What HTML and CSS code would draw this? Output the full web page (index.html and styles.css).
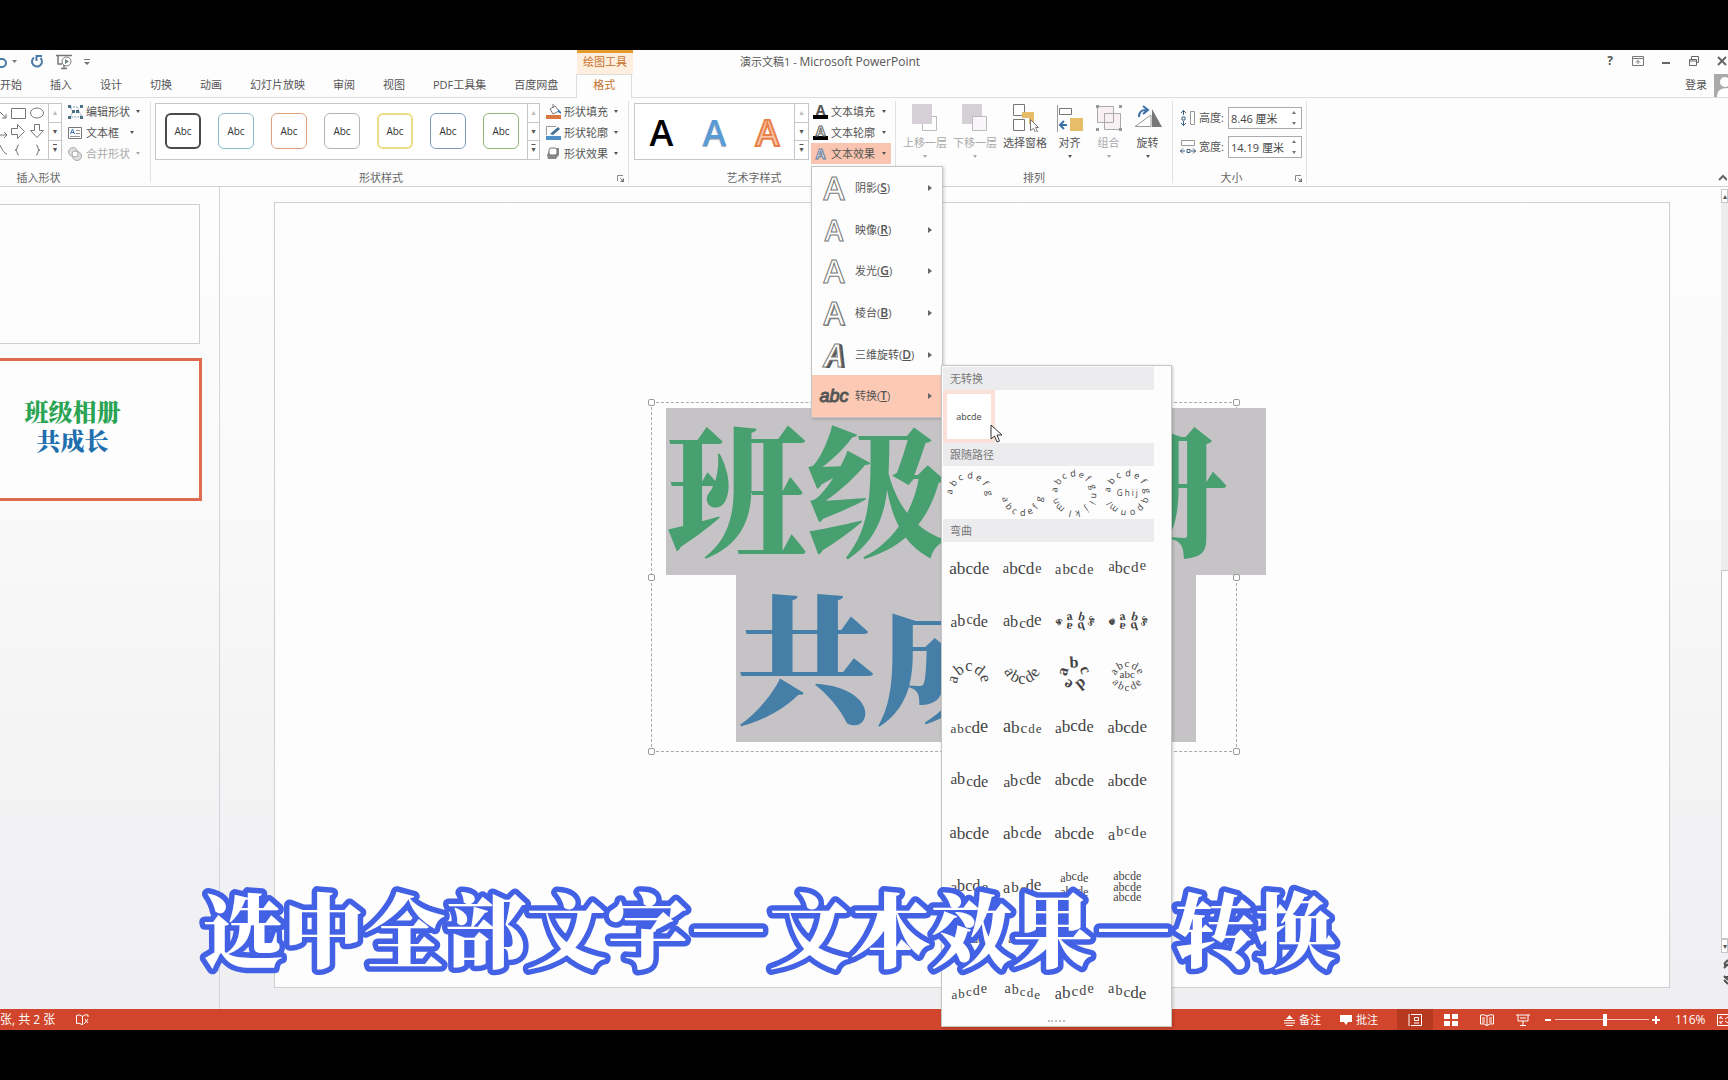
FILE: index.html
```html
<!DOCTYPE html>
<html lang="zh-CN">
<head>
    <meta charset="UTF-8">
    <meta name="viewport" content="width=device-width, initial-scale=1.0">
    <title>演示文稿1 - Microsoft PowerPoint</title>
    <link rel="stylesheet" href="styles.css">
</head>
<body>
    <div class="window">
        <!-- Title bar -->
        <header class="titlebar">
            <div class="quick-access">
                <button aria-label="撤消"><svg width="18" height="16" viewBox="0 0 18 16"><path d="M-2 5h4a4 4 0 0 1 0 8h-2" fill="none" stroke="#4a7ba6" stroke-width="2"/><path d="M12 6h5l-2.500 3z" fill="#777"/></svg></button>
                <button aria-label="重复"><svg width="14" height="14" viewBox="0 0 14 14"><path d="M4 2.500A5 5 0 1 0 10.500 3" fill="none" stroke="#4a7ba6" stroke-width="2"/><path d="M6.500 6V1H12" fill="none" stroke="#4a7ba6" stroke-width="2"/></svg></button>
                <button aria-label="放映"><svg width="16" height="16" viewBox="0 0 16 16"><path d="M0 1.500h16M2 2v8h4M5 14.500h6M8 11v3" fill="none" stroke="#777" stroke-width="1.500"/><circle cx="10.500" cy="7.500" r="4.500" fill="#fff" stroke="#777"/><path d="M9 5l4 2.500L9 10z" fill="#6a8a80"/></svg></button>
                <button aria-label="自定义"><svg width="6" height="8" viewBox="0 0 6 8"><path d="M0 1h6v1H0zM0 4h6L3 7z" fill="#777"/></svg></button>
            </div>
            <div class="context-title">绘图工具</div>
            <h1>演示文稿1 - <span>Microsoft PowerPoint</span></h1>
            <div class="window-buttons">
                <button aria-label="帮助" class="help">?</button>
                <button aria-label="功能区显示选项"><svg width="12" height="10" viewBox="0 0 12 10"><path d="M.5.5h11v9H.5zM.5 2.500h11M6 8V4.500M4 6.500l2-2 2 2" fill="none" stroke="#777"/></svg></button>
                <button aria-label="最小化"><svg width="12" height="10" viewBox="0 0 12 10"><path d="M2 7h8" stroke="#666" stroke-width="2"/></svg></button>
                <button aria-label="还原"><svg width="12" height="10" viewBox="0 0 12 10"><path d="M1.500 3.500h7v6h-7zM3.500 3V.5h7v6H9M1.500 5h7" fill="none" stroke="#666"/></svg></button>
                <button aria-label="关闭"><svg width="12" height="10" viewBox="0 0 12 10"><path d="M2 1l8 8M10 1L2 9" stroke="#666" stroke-width="2"/></svg></button>
            </div>
        </header>

        <!-- Tabs -->
        <nav class="tabs">
            <a href="#">开始</a>
            <a href="#">插入</a>
            <a href="#">设计</a>
            <a href="#">切换</a>
            <a href="#">动画</a>
            <a href="#">幻灯片放映</a>
            <a href="#">审阅</a>
            <a href="#">视图</a>
            <a href="#">PDF工具集</a>
            <a href="#">百度网盘</a>
            <a href="#" class="active">格式</a>
            <a href="#" class="sign-in">登录</a>
            <svg class="avatar" width="14" height="23" viewBox="0 0 14 23"><path d="M0 0h14v23H0z" fill="#aaa"/><circle cx="11" cy="8" r="5" fill="#fff"/><path d="M3 23c0-6 3-9 11-9v9z" fill="#fff"/></svg>
        </nav>

        <!-- Ribbon -->
        <section class="ribbon">
            <div class="group insert-group">
                <div class="group-body">
                    <div class="gallery shapes">
                        <svg width="48" height="54" viewBox="0 0 48 54" fill="none" stroke="#777"><path d="M0 8l6 6M6 10v4H2M11.500 4.500h14v10h-14z"/><ellipse cx="37" cy="9" rx="6.500" ry="5"/><path d="M0 31h7M4 28l3 3-3 3M11.500 24.500h6v-4l7 7-7 7v-4h-6zM34.500 20.500h5v6h4l-6.500 7-6.500-7h4zM0 41q4 9 7 9M19 41q-2 0-2 3t-2 2q2 0 2 2 0 3 2 3M36 41q2 0 2 3t2 2q-2 0-2 2 0 3-2 3"/></svg>
                        <div class="scroller"><button class="off">▴</button><button>▾</button><button>▾</button></div>
                    </div>
                    <div class="commands">
                        <button><svg width="16" height="14" viewBox="0 0 16 14"><path d="M2 2L9 2 14 12H2L5 7z" fill="none" stroke="#8899aa" stroke-dasharray="2 1"/><path d="M0 0h3v3H0zM12 0h3v3h-3zM0 11h3v3H0zM12 11h3v3h-3zM4 5h3v3H4zM8 5h3v3H8z" fill="#4a7186"/></svg>编辑形状<i class="caret"></i></button>
                        <button><svg width="16" height="14" viewBox="0 0 16 14"><path d="M.5 1.500h13v11H.5z" fill="#fff" stroke="#777"/><path d="M2.500 8L4.500 3l2 5M3 6.500h3" fill="none" stroke="#3d78b5"/><path d="M8 4.500h4M8 7.500h4M2 10.500h10" stroke="#999"/></svg>文本框<i class="caret wide"></i></button>
                        <button disabled><svg width="16" height="14" viewBox="0 0 16 14" stroke="#aaa" fill="#ddd"><circle cx="5" cy="5" r="4.500"/><circle cx="9" cy="9" r="4.500"/><circle cx="7" cy="7" r="3" fill="#fff"/></svg>合并形状<i class="caret"></i></button>
                    </div>
                </div>
                <div class="group-label">插入形状</div>
            </div>

            <div class="group style-group">
                <div class="group-body">
                    <div class="gallery styles">
                        <button class="swatch black">Abc</button>
                        <button class="swatch teal">Abc</button>
                        <button class="swatch orange">Abc</button>
                        <button class="swatch gray">Abc</button>
                        <button class="swatch yellow">Abc</button>
                        <button class="swatch blue">Abc</button>
                        <button class="swatch green">Abc</button>
                        <div class="scroller"><button class="off">▴</button><button>▾</button><button>▾</button></div>
                    </div>
                    <div class="commands">
                        <button><svg width="16" height="15" viewBox="0 0 16 15"><path d="M4 5l5-3 4 5-6 3zM7 4V0" fill="#fff" stroke="#777"/><path d="M12 5l3 3v2l-3-2z" fill="#3d78b5"/><path d="M0 11h15v4H0z" fill="#d97742"/></svg>形状填充<i class="caret"></i></button>
                        <button><svg width="16" height="15" viewBox="0 0 16 15"><path d="M.5 10V1.500H10" fill="none" stroke="#999"/><path d="M4 9l8-7 2 2-7 6z" fill="#3f6f95"/><path d="M0 11h15v4H0z" fill="#4f8fc7"/></svg>形状轮廓<i class="caret"></i></button>
                        <button><svg width="16" height="15" viewBox="0 0 16 15"><path d="M5 2h8v7l-3 4H2l-1-4z" fill="#888"/><rect x="3" y="2" width="8" height="7" rx="2" fill="#fff" stroke="#777"/></svg>形状效果<i class="caret"></i></button>
                    </div>
                </div>
                <div class="group-label">形状样式</div>
                <button class="launcher" aria-label="设置形状格式"><svg width="8" height="8" viewBox="0 0 8 8"><path d="M.5 6V.5H6M3 3l3 3" fill="none" stroke="#888"/><path d="M7 3v4H3z" fill="#777"/></svg></button>
            </div>

            <div class="group wordart-group">
                <div class="group-body">
                    <div class="gallery wordart">
                        <button class="art plain">A</button>
                        <button class="art sky">A</button>
                        <button class="art peach">A</button>
                        <div class="scroller"><button class="off">▴</button><button>▾</button><button>▾</button></div>
                    </div>
                    <div class="commands text-commands">
                        <button><span class="letter fill">A</span>文本填充<i class="caret"></i></button>
                        <button><span class="letter outline">A</span>文本轮廓<i class="caret"></i></button>
                        <button class="open"><span class="letter effect">A</span>文本效果<i class="caret"></i></button>
                        <ul class="effect-menu">
                            <li><button><span class="big-a">A</span>阴影(<u>S</u>)<i class="arrow"></i></button></li>
                            <li><button><span class="big-a mirror">A</span>映像(<u>R</u>)<i class="arrow"></i></button></li>
                            <li><button><span class="big-a">A</span>发光(<u>G</u>)<i class="arrow"></i></button></li>
                            <li><button><span class="big-a bevel">A</span>棱台(<u>B</u>)<i class="arrow"></i></button></li>
                            <li><button><span class="big-a depth">A</span>三维旋转(<u>D</u>)<i class="arrow"></i></button></li>
                            <li class="current"><button><span class="big-abc">abc</span>转换(<u>T</u>)<i class="arrow"></i></button>
                                <div class="warp-panel">
                                    <h2>无转换</h2>
                                    <button class="no-warp">abcde</button>
                                    <h2>跟随路径</h2>
                                    <div class="warp-grid" id="paths"></div>
                                    <h2>弯曲</h2>
                                    <div class="warp-grid" id="warps"></div>
                                    <div class="grip"></div>
                                    <svg class="pointer" width="13" height="20" viewBox="0 0 13 20"><path d="M1 1v14l3.500-3 2.500 6 2.500-1-2.500-6H12z" fill="#fff" stroke="#333"/></svg>
                                </div>
                            </li>
                        </ul>
                    </div>
                </div>
                <div class="group-label">艺术字样式</div>
            </div>

            <div class="group arrange-group">
                <div class="group-body">
                    <button class="large" disabled><svg width="28" height="28" viewBox="0 0 28 28"><path d="M11.500 12.500h14v14h-14z" fill="#fff" stroke="#bbb"/><path d="M1 0h20v20H1z" fill="#d5d0d6"/></svg>上移一层<i class="caret"></i></button>
                    <button class="large" disabled><svg width="28" height="28" viewBox="0 0 28 28"><path d="M1 0h20v20H1z" fill="#d5d0d6"/><path d="M11.500 12.500h14v14h-14z" fill="#faf5fa" stroke="#bbb"/></svg>下移一层<i class="caret"></i></button>
                    <button class="large"><svg width="28" height="28" viewBox="0 0 28 28"><path d="M2.500.5h11v11h-11zM2.500 15.500h11v11h-11z" fill="#fff" stroke="#777"/><path d="M11 8h12v12h-5v-6h-7z" fill="#e8bd6a"/><path d="M19.500 15.500v11l3-2 2 4 2-1-2-4h3z" fill="#fff" stroke="#777"/></svg>选择窗格</button>
                    <button class="large narrow"><svg width="28" height="28" viewBox="0 0 28 28"><path d="M1.500 1v27" stroke="#999"/><path d="M3.500 4.500h12v6h-12z" fill="#fff" stroke="#777"/><path d="M14 14h13v13H14z" fill="#e8bd6a"/><path d="M11 21H5m3-4l-4 4 4 4" fill="none" stroke="#3d6ea5" stroke-width="2"/></svg>对齐<i class="caret"></i></button>
                    <button class="large narrow" disabled><svg width="28" height="28" viewBox="0 0 28 28"><path d="M2.500 2.500h16v16h-16zM9.500 9.500h16v16h-16z" fill="#f5e9ee" fill-opacity=".7" stroke="#aaa"/><path d="M1 1h3v3H1zM24 1h3v3h-3zM1 24h3v3H1zM24 24h3v3h-3z" fill="#999"/></svg>组合<i class="caret"></i></button>
                    <button class="large narrow"><svg width="28" height="28" viewBox="0 0 28 28"><path d="M1 22.500h16V11z" fill="#fff" stroke="#999"/><path d="M18 23V5l10 18z" fill="#777"/><path d="M5 13c0-6 3-7 7-7m-3-4l5 4-5 4" fill="none" stroke="#3d6ea5" stroke-width="2"/></svg>旋转<i class="caret"></i></button>
                </div>
                <div class="group-label">排列</div>
            </div>

            <div class="group size-group">
                <div class="group-body">
                    <div class="size-row">
                        <svg width="16" height="16" viewBox="0 0 16 16"><path d="M10.500 1.500h4v13h-4z" fill="#fff" stroke="#999"/><path d="M3.500 0v5M1 3l2.500-2.500L6 3M3.500 16v-5M1 13l2.500 2.500L6 13" fill="none" stroke="#3d6080"/><path d="M2 7h3v3H2z" fill="none" stroke="#3d6080"/></svg>
                        <label for="height">高度:</label>
                        <div class="spin"><input id="height" type="text" value="8.46 厘米"><i class="up"></i><i class="down"></i></div>
                    </div>
                    <div class="size-row">
                        <svg width="16" height="16" viewBox="0 0 16 16"><path d="M1.500 1.500h13v5h-13z" fill="#fff" stroke="#999"/><path d="M0 12h5M3 9.500L.5 12 3 14.500M16 12h-5M13 9.500l2.500 2.500L13 14.500" fill="none" stroke="#3d6080"/><path d="M7 10.500h3v3H7z" fill="none" stroke="#3d6080"/></svg>
                        <label for="width">宽度:</label>
                        <div class="spin"><input id="width" type="text" value="14.19 厘米"><i class="up"></i><i class="down"></i></div>
                    </div>
                </div>
                <div class="group-label">大小</div>
                <button class="launcher" aria-label="大小和位置"><svg width="8" height="8" viewBox="0 0 8 8"><path d="M.5 6V.5H6M3 3l3 3" fill="none" stroke="#888"/><path d="M7 3v4H3z" fill="#777"/></svg></button>
            </div>
            <button class="collapse" aria-label="折叠功能区"><svg width="9" height="8" viewBox="0 0 9 8"><path d="M1 6l4-4 4 4" fill="none" stroke="#666" stroke-width="2"/></svg></button>
        </section>

        <!-- Slides -->
        <main class="workspace">
            <aside class="thumbs">
                <div class="thumb"></div>
                <div class="thumb selected">
                    <p class="green-text">班级相册</p>
                    <p class="blue-text">共成长</p>
                </div>
            </aside>
            <div class="stage">
                <div class="slide">
                    <div class="textbox">
                        <p class="green-text"><span>班级相册</span></p>
                        <p class="blue-text"><span>共成长</span></p>
                        <i class="handle nw"></i><i class="handle ne"></i>
                        <i class="handle w"></i><i class="handle e"></i>
                        <i class="handle sw"></i><i class="handle se"></i>
                    </div>
                </div>
            </div>
            <div class="scrollbar">
                <button aria-label="向上">▴</button>
                <div class="track"></div>
                <div class="scroll-thumb"></div>
                <button aria-label="向下">▾</button>
                <div class="page-arrows"><svg width="7" height="28" viewBox="0 0 7 28"><path d="M3 6l4-4M3 10l4-4M3 18l4 4M3 22l4 4M3 7h4M3 19h4" stroke="#555" stroke-width="2"/></svg></div>
            </div>
        </main>

        <!-- Status bar -->
        <footer class="statusbar">
            <span class="count">张, 共 2 张</span>
            <svg width="13" height="12" viewBox="0 0 13 12" fill="none" stroke="#fff"><path d="M6.500 2v9M6 2Q3 0 .5 1.500v8Q3 8.500 6 10.500M7 2q2-2 5-1v2M8 10l4-5M9 5l3 4"/></svg>
            <div class="status-right">
                <button class="notes"><svg width="11" height="12" viewBox="0 0 11 12"><path d="M2 5l3.500-4L9 5z" fill="#fff"/><path d="M0 6.500h11M0 9h11M2 11.500h7" stroke="#fff"/></svg>备注</button>
                <button class="comments"><svg width="12" height="12" viewBox="0 0 12 12"><path d="M0 1h12v7H8l-2 3-2-3H0z" fill="#fff"/></svg>批注</button>
                <button class="view active" aria-label="普通"><svg width="14" height="12" viewBox="0 0 14 12" fill="none" stroke="#fff"><path d="M1 0v12M3 .5h10.500v11H3M6.500 3.500h4v3h-4zM6 9h5"/></svg></button>
                <button class="view" aria-label="幻灯片浏览"><svg width="14" height="12" viewBox="0 0 14 12"><path d="M0 0h6v5H0zM8 0h6v5H8zM0 7h6v5H0zM8 7h6v5H8z" fill="#fff"/></svg></button>
                <button class="view" aria-label="阅读视图"><svg width="14" height="12" viewBox="0 0 14 12" fill="none" stroke="#fff"><path d="M7 2v10M7 2Q4 0 .5 1v9Q4 9 7 11.500 10 9 13.500 10V1Q10 0 7 2M2 4h3M2 6h3M2 8h3M9 4h3M9 6h3M9 8h3"/></svg></button>
                <button class="view" aria-label="幻灯片放映"><svg width="14" height="12" viewBox="0 0 14 12" fill="none" stroke="#fff"><path d="M0 1h14M2 1v6h10V1M7 7v4M4 11.500h6M4 4h6"/></svg></button>
                <button class="zoom-step" aria-label="缩小"><svg width="8" height="8" viewBox="0 0 8 8"><path d="M1 4h6" stroke="#fff" stroke-width="2"/></svg></button>
                <input type="range" min="0" max="100" value="53" aria-label="缩放">
                <button class="zoom-step" aria-label="放大"><svg width="8" height="8" viewBox="0 0 8 8"><path d="M0 4h8M4 0v8" stroke="#fff" stroke-width="2"/></svg></button>
                <span class="percent">116%</span>
                <svg width="11" height="12" viewBox="0 0 11 12" fill="none" stroke="#fff"><path d="M11 .5H.5v11H11M3 3l3 2M3 9l3-2M3 5V3h2M3 7v2h2M11 3L8 5M11 9L8 7"/></svg>
            </div>
        </footer>

        <svg class="caption" width="1150" height="100"><text x="6" y="79">选中全部文字—文本效果—转换</text></svg>
    </div>
    <script src="script.js"></script>
</body>
</html>
```
FILE: styles.css
```css
/* Page */
* {
    box-sizing: border-box;
}

body {
    margin: 0;
    padding: 50px 0;
    height: 100vh;
    background-color: #000;
    color: #555;
    font-family: "Open Sans", "Noto Sans CJK SC", sans-serif;
    font-size: 11px;
    line-height: 16px;
    overflow: hidden;
}

button {
    margin: 0;
    padding: 0;
    border: none;
    background: none;
    color: inherit;
    font: inherit;
    white-space: nowrap;
}

button:disabled {
    color: #aaa;
}

h1, h2, p, ul {
    margin: 0;
    padding: 0;
}

h1, h2 {
    font-weight: normal;
}

svg {
    display: block;
    flex: none;
}

.window {
    position: relative;
    display: flex;
    flex-direction: column;
    height: 100%;
    background-color: #fdfdfd;
}

/* Title bar */
.titlebar {
    display: flex;
    height: 24px;
}

.quick-access {
    display: flex;
    align-items: center;
    gap: 12px;
    width: 577px;
}

.context-title {
    width: 56px;
    border-top: 3px solid #e59a2c;
    background-color: #fdeedd;
    color: #c5712e;
    line-height: 18px;
    text-align: center;
}

h1 {
    margin-left: 107px;
    font-size: 11px;
    line-height: 23px;
    white-space: nowrap;
}

h1 span {
    font-size: 12px;
}

.window-buttons {
    display: flex;
    align-items: center;
    gap: 16px;
    margin-left: auto;
    padding-bottom: 2px;
}

.help {
    width: 12px;
    font-size: 12px;
    font-weight: bold;
}

/* Tabs */
.tabs {
    display: flex;
    height: 24px;
    border-bottom: 1px solid #dcdcdc;
}

.tabs a {
    padding: 0 14px;
    color: #555;
    line-height: 22px;
    text-decoration: none;
    white-space: nowrap;
}

.tabs a:first-child {
    padding-left: 0;
}

.tabs .active {
    height: 24px;
    margin-left: 4px;
    padding: 0 16px;
    border: 1px solid #dcdcdc;
    border-bottom: none;
    background-color: #fdfdfd;
    color: #c5712e;
    line-height: 20px;
}

.tabs .sign-in {
    margin-left: auto;
    padding: 0 7px;
}

/* Ribbon */
.ribbon {
    display: flex;
    height: 89px;
    padding-top: 3px;
    border-bottom: 1px solid #d2d0d4;
}

.group {
    position: relative;
    display: flex;
    flex: none;
    flex-direction: column;
    height: 82px;
    border-right: 1px solid #e2e2e2;
}

.insert-group {
    width: 151px;
}

.style-group {
    width: 478px;
    padding-left: 4px;
}

.wordart-group {
    width: 267px;
    padding-left: 5px;
}

.arrange-group {
    width: 277px;
}

.size-group {
    width: 134px;
}

.group-body {
    display: flex;
    height: 69px;
    flex: none;
}

.group-label {
    text-align: center;
    color: #666;
}

.insert-group .group-label {
    width: 77px;
}

.style-group .group-label {
    width: 452px;
}

.wordart-group .group-label {
    width: 240px;
}

.size-group .group-label {
    width: 117px;
}

.gallery {
    display: flex;
    height: 57px;
    margin-top: 2px;
    border: 1px solid #c6c6c6;
    background-color: #fff;
}

.shapes {
    width: 62px;
    border-left: none;
}

.styles {
    width: 385px;
    align-items: center;
    gap: 17px;
    padding-left: 9px;
}

.wordart {
    width: 175px;
}

.scroller {
    display: flex;
    flex-direction: column;
    width: 14px;
    height: 55px;
    margin-left: auto;
    border-left: 1px solid #c6c6c6;
}

.scroller button {
    flex: 1;
    font-family: "DejaVu Sans", sans-serif;
    font-size: 8px;
    line-height: 8px;
}

.scroller button + button {
    border-top: 1px solid #c6c6c6;
}

.scroller button:last-child {
    text-decoration: overline;
}

.scroller .off {
    color: #bbb;
}

.styles .scroller {
    margin-left: -9px;
}

.swatch {
    width: 36px;
    height: 36px;
    flex: none;
    margin-bottom: 2px;
    border: 1px solid;
    border-radius: 6px;
    color: #333;
    font-size: 10px;
    line-height: 32px;
}

.black { border: 2px solid #4a4a4a; }
.teal { border-color: #8ab9cb; }
.orange { border-color: #e0a07c; }
.gray { border-color: #b5b5b5; }
.yellow { border: 2px solid #ecdc84; }
.blue { border-color: #7c9cbc; }
.green { border-color: #90ba78; }

.art {
    flex: 1;
    font-size: 36px;
    font-weight: 600;
    line-height: 58px;
}

.plain {
    color: #000;
}

.sky {
    color: #5b9bd5;
    text-shadow: 0 1px 1px #aaa;
}

.peach {
    color: #f8c4a4;
    -webkit-text-stroke: 2px #e8804a;
}

.commands {
    display: flex;
    flex-direction: column;
    margin-left: 6px;
}

.commands > button {
    display: flex;
    align-items: center;
    gap: 2px;
    height: 21px;
}

.caret {
    width: 0;
    margin-left: 4px;
    border: 2px solid transparent;
    border-top: 3px solid;
    border-bottom: none;
}

.caret.wide {
    margin-left: 9px;
}

.text-commands {
    position: relative;
}

.wordart-group .text-commands {
    margin-left: 2px;
}

.text-commands > button {
    width: 80px;
    padding-left: 2px;
    gap: 3px;
}

.text-commands > .open {
    background-color: #f9c5b0;
}

.letter {
    width: 15px;
    height: 15px;
    font-size: 14px;
    font-weight: bold;
    line-height: 12px;
    text-align: center;
}

.letter.fill {
    border-bottom: 4px solid #000;
}

.letter.outline {
    border-bottom: 4px solid #000;
    color: #fff;
    -webkit-text-stroke: 1px #666;
}

.letter.effect {
    color: #dde6f2;
    line-height: 15px;
    -webkit-text-stroke: 1px #6b7f9c;
}

.launcher {
    position: absolute;
    right: 3px;
    bottom: 0;
}

.large {
    display: flex;
    flex-direction: column;
    align-items: center;
    width: 50px;
    padding-top: 3px;
}

.large.narrow {
    width: 39px;
}

.large .caret {
    margin: 4px 0 0;
}

.large svg {
    margin-bottom: 3px;
}

.arrange-group .group-body {
    padding-left: 4px;
}

.size-group .group-body {
    flex-direction: column;
    gap: 7px;
    padding: 6px 0 0 7px;
}

.size-row {
    display: flex;
    align-items: center;
    gap: 3px;
}

.size-row label {
    width: 26px;
}

.spin {
    position: relative;
    width: 74px;
    height: 22px;
}

.spin input {
    width: 100%;
    height: 100%;
    padding: 0 2px;
    border: 1px solid #ababab;
    background-color: #fff;
    color: #444;
    font-family: inherit;
    font-size: 11px;
}

.spin i {
    position: absolute;
    right: 6px;
    border: 2px solid transparent;
}

.spin .up {
    top: 4px;
    border-top: none;
    border-bottom: 3px solid #777;
}

.spin .down {
    bottom: 4px;
    border-bottom: none;
    border-top: 3px solid #777;
}

.collapse {
    align-self: flex-end;
    margin: 0 1px 4px auto;
}

/* Text effect menu */
.effect-menu {
    position: absolute;
    top: 65px;
    left: 0;
    z-index: 2;
    display: flex;
    flex-direction: column;
    width: 132px;
    height: 252px;
    border: 1px solid #c6c6c6;
    background-color: #fdfdfd;
    box-shadow: 1px 1px 3px rgba(0, 0, 0, 0.2);
    list-style: none;
}

.effect-menu li {
    position: relative;
    display: flex;
    flex: 1;
}

.effect-menu li > button {
    display: flex;
    align-items: center;
    width: 100%;
    padding-left: 7px;
}

.effect-menu u {
    font-size: 12px;
    font-weight: 600;
}

.effect-menu .current {
    background-color: #fcc9b5;
}

.big-a {
    width: 30px;
    margin-right: 6px;
    color: #fff;
    font-size: 32px;
    font-weight: 600;
    line-height: 36px;
    -webkit-text-stroke: 1px #777;
}

.big-a.mirror {
    font-size: 28px;
}

.big-a.bevel {
    text-shadow: 1px 1px 0 #777;
}

.big-a.depth {
    font-style: italic;
    text-shadow: 2px 0 0 #555, 3px 1px 0 #555;
}

.big-abc {
    width: 30px;
    margin-right: 6px;
    color: #555;
    font-family: "Liberation Sans", sans-serif;
    font-size: 18px;
    font-style: italic;
    -webkit-text-stroke: 1px #555;
}

.arrow {
    margin: 0 10px 0 auto;
    border: 3px solid transparent;
    border-left: 4px solid #666;
    border-right: none;
}

/* Transform gallery */
.warp-panel {
    position: absolute;
    bottom: -610px;
    left: 129px;
    width: 231px;
    height: 662px;
    padding: 1px;
    border: 1px solid #c6c6c6;
    background-color: #fdfdfd;
    box-shadow: 1px 1px 3px rgba(0, 0, 0, 0.2);
}

.warp-panel h2 {
    width: 211px;
    height: 23px;
    padding-left: 7px;
    background-color: #ececee;
    color: #777;
    font-size: 11px;
    line-height: 24px;
}

.no-warp {
    display: block;
    width: 52px;
    height: 53px;
    border: 4px solid #fbe0da;
    background-color: #fff;
    color: #444;
    font-size: 9px;
}

.warp-grid {
    display: grid;
    grid-template-columns: repeat(4, 1fr);
    grid-auto-rows: 53px;
    width: 210px;
}

.warp-grid svg {
    width: 100%;
    height: 53px;
    overflow: visible;
    fill: #444;
    font-family: "Liberation Serif", serif;
    text-anchor: middle;
}

#paths svg {
    font-family: "Open Sans", sans-serif;
}

.grip {
    width: 17px;
    margin: 1px auto;
    border-top: 2px dotted #c0c0c0;
}

.pointer {
    position: absolute;
    top: 58px;
    left: 48px;
}

/* Slides */
.workspace {
    display: flex;
    flex: 1;
    min-height: 0;
    overflow: hidden;
    background: linear-gradient(#fdfdfd, #fafafb 35%, #f5f5f6 60%, #efeef1);
}

.thumbs {
    width: 220px;
    flex: none;
    overflow: hidden;
    padding-top: 17px;
    border-right: 1px solid #d5d4d8;
}

.thumb {
    width: 247px;
    height: 140px;
    margin-left: -47px;
    margin-bottom: 14px;
    border: 1px solid #d0cdd4;
    background-color: #fdfdfd;
}

.thumb.selected {
    width: 249px;
    height: 143px;
    padding-top: 35px;
    padding-right: 10px;
    border: 3px solid #dd6c50;
    font-family: "Noto Serif CJK SC", "Noto Sans CJK SC", sans-serif;
    font-size: 24px;
    font-weight: 900;
    line-height: 29px;
    text-align: center;
}

.thumb .green-text {
    color: #2aa454;
}

.thumb .blue-text {
    color: #1f6fae;
}

.stage {
    display: flex;
    flex: 1;
    padding: 15px 51px 21px 54px;
}

.slide {
    position: relative;
    flex: 1;
    border: 1px solid #d0cfd3;
    background-color: #fdfdfd;
}

.textbox {
    position: absolute;
    top: 199px;
    left: 27%;
    width: 586px;
    height: 350px;
    padding: 5px 0 0 14px;
    border: 1px dashed #aaa;
    font-family: "Noto Serif CJK SC", "Noto Sans CJK SC", sans-serif;
    font-size: 140px;
    font-weight: 900;
    line-height: 153px;
}

.textbox p {
    display: flex;
    justify-content: center;
    width: 600px;
}

.textbox span {
    height: 167px;
    padding-right: 40px;
    background-color: #c5c3c6;
    white-space: nowrap;
}

.textbox .green-text {
    color: #489f70;
}

.textbox .blue-text {
    color: #457fa8;
}

.handle {
    position: absolute;
    width: 7px;
    height: 7px;
    border: 1px solid #999;
    border-radius: 2px;
    background-color: #fff;
}

.nw { top: -4px; left: -4px; }
.ne { top: -4px; right: -4px; }
.w { top: 171px; left: -4px; }
.e { top: 171px; right: -4px; }
.sw { bottom: -4px; left: -4px; }
.se { bottom: -4px; right: -4px; }

.scrollbar {
    display: flex;
    flex-direction: column;
    width: 7px;
    padding-top: 2px;
    overflow: hidden;
}

.scrollbar button {
    height: 14px;
    border: 1px solid #c6c6c6;
    background-color: #fff;
    font-size: 8px;
    line-height: 10px;
}

.track {
    flex: 1;
    background-color: #ededee;
}

.scroll-thumb {
    flex: 1;
    border: 1px solid #c6c6c6;
    border-right: none;
    background-color: #fff;
}

.page-arrows {
    height: 56px;
    padding-top: 5px;
}

/* Status bar */
.statusbar {
    display: flex;
    align-items: center;
    height: 21px;
    background-color: #d0452b;
    color: #fff;
}

.count {
    width: 76px;
    font-size: 12px;
}

.status-right {
    display: flex;
    align-items: center;
    margin-left: auto;
}

.notes, .comments {
    display: flex;
    align-items: center;
    gap: 4px;
    margin-right: 19px;
}

.view {
    display: flex;
    align-items: center;
    justify-content: center;
    width: 36px;
    height: 21px;
}

.view.active {
    background-color: #b73a20;
}

.zoom-step {
    margin: 0 3px;
}

input[type="range"] {
    width: 94px;
    height: 12px;
    margin: 0;
    appearance: none;
    background: linear-gradient(#f3c4b8, #f3c4b8) center / 100% 1px no-repeat;
}

input[type="range"]::-webkit-slider-thumb {
    appearance: none;
    width: 4px;
    height: 12px;
    background-color: #fff;
}

.percent {
    width: 54px;
    padding-left: 12px;
    font-size: 12px;
}

/* Video caption */
.caption {
    position: absolute;
    bottom: 48px;
    left: 196px;
    z-index: 3;
    overflow: visible;
    fill: #fff;
    stroke: #4361e4;
    stroke-width: 11px;
    stroke-linejoin: round;
    paint-order: stroke;
    font-family: "Noto Serif CJK SC", "Noto Sans CJK SC", sans-serif;
    font-size: 81px;
    font-weight: 900;
}
```
FILE: script.js
```javascript
const letters = ['a', 'b', 'c', 'd', 'e'];

// one line of text, each letter with its own size and baseline
function line(sizes, rise, y = 5) {
    const spans = sizes.map((size, i) => {
        const dy = i ? rise[i - 1] - rise[i] : -rise[0];
        const dx = i && size > 12 && size < 16 ? 1 : 0;
        return `<tspan dx="${dx}" dy="${dy}" font-size="${size}">${letters[i]}</tspan>`;
    }).join('');
    return `<text x="0" y="${y}">${spans}</text>`;
}

// letters set round a circle, angles in degrees from the top
function ring(text, r, start, step, size, cy = 0, inside = false, weight = 400) {
    const xs = [], ys = [], turns = [];
    [...text].forEach((ch, i) => {
        const a = start + i * step;
        const rad = a * Math.PI / 180;
        // shift back by about half a letter along the tangent
        const half = (inside ? -1 : 1) * size / 4;
        xs.push((r * Math.sin(rad) - half * Math.cos(rad)).toFixed(1));
        ys.push((cy - r * Math.cos(rad) - half * Math.sin(rad)).toFixed(1));
        turns.push(inside ? a + 180 : a);
    });
    return `<text x="${xs.join(' ')}" y="${ys.join(' ')}" rotate="${turns.join(' ')}" font-size="${size}" font-weight="${weight}" text-anchor="start">${text}</text>`;
}

function draw(id, cells) {
    document.getElementById(id).innerHTML = cells.map(cell =>
        `<svg viewBox="-26 -26 52 52">${cell}</svg>`
    ).join('');
}

const flat = [0, 0, 0, 0, 0];

draw('paths', [
    ring('abcdefg', 17, -80, 27, 9, 3),
    ring('abcdefg', 20, 258, -26, 9, 3, true),
    ring('abcdefgnijklmn', 17, -80, 25, 9, 1),
    ring('abcdefgqponml', 17, -80, 27, 9, 1) + '<text x="0" y="3" font-size="8">G h i j</text>'
]);

draw('warps', [
    line([17, 17, 17, 17, 17], flat),
    line([14, 17, 18, 17, 14], [1, 0, 0, 0, 1]),
    line([14, 15, 17, 15, 14], flat),
    line([14, 16, 16, 15, 14], [3, 1, 0, 2, 4]),
    line([15, 16, 14, 16, 16], [0, 1, 3, 1, 0]),
    line([16, 16, 15, 16, 17], [1, 0, -1, 0, 2]),
    ring('sabs', 22, -38, 27, 12, 20, false, 700) + ring('sabs', 22, 218, -27, 12, -20, false, 700),
    ring('eabs', 22, -38, 27, 12, 20, false, 700) + ring('eabs', 22, 218, -27, 12, -20, false, 700),
    ring('abcde', 12, -74, 37, 16, 9),
    ring('abcde', 19, 238, -29, 16, -10, true),
    ring('abcde', 7, -75, 72, 16, 0, false, 700),
    ring('abcde', 12, -58, 29, 11, 5) + '<text y="3" font-size="11">abc</text>' + ring('abcde', 18, 228, -24, 11, -2, true),
    line([13, 13, 15, 17, 18], [0, 0, 0, 0, 1]),
    line([18, 17, 15, 13, 13], [1, 0, 0, 0, 0]),
    line([15, 17, 17, 17, 16], [0, 1, 2, 2, 1]),
    line([16, 17, 17, 17, 17], [0, 1, 0, 0, 1]),
    line([15, 16, 15, 16, 16], [2, 2, 0, -1, -1]),
    line([15, 16, 15, 16, 16], [-1, 0, 1, 2, 2]),
    line([16, 17, 17, 17, 16], [1, 1, 0, 0, 0]),
    line([15, 17, 17, 17, 17], [0, 0, 0, 0, 1]),
    line([16, 17, 17, 17, 17], [1, 0, 0, 0, 1]),
    line([17, 16, 14, 16, 17], [0, 1, 1, 1, 0]),
    line([16, 17, 17, 17, 17], [1, 0, 0, 0, 0]),
    line([16, 14, 13, 15, 15], [-1, 3, 5, 3, 1]),
    line([15, 16, 16, 16, 15], [0, 1, 1, 1, 0]),
    line([16, 15, 13, 16, 17], [-1, 0, -1, 1, 2]),
    line([12, 12, 12, 12, 12], [0, 1, 2, 1, 0], -4) + line([12, 12, 12, 12, 12], [0, 1, 2, 1, 0], 9),
    line([12, 12, 12, 12, 12], flat, -6) + line([12, 12, 12, 12, 12], flat, 4) + line([12, 12, 12, 12, 12], flat, 14),
    line([12, 12, 12, 12, 12], flat, 3),
    line([12, 12, 12, 12, 12], flat, 3),
    '',
    '',
    line([13, 13, 13, 14, 14], [-1, 0, 2, 3, 5]),
    line([14, 14, 13, 13, 13], [5, 4, 2, 1, -1]),
    line([16, 17, 15, 14, 14], [-1, 0, 2, 3, 5]),
    line([14, 14, 15, 17, 17], [5, 3, 1, 0, -1])
]);
```
